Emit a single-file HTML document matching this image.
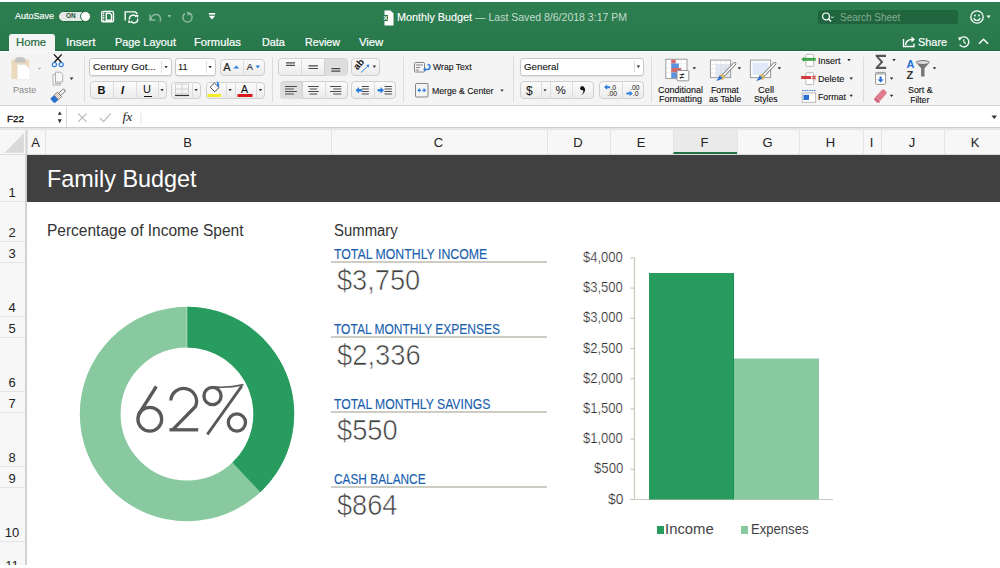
<!DOCTYPE html>
<html><head><meta charset="utf-8">
<style>
*{margin:0;padding:0;box-sizing:border-box}
html,body{width:1000px;height:568px;overflow:hidden;background:#fff;font-family:"Liberation Sans",sans-serif;color:#222}
.a{position:absolute}
.t{position:absolute;white-space:nowrap;line-height:1}
#title{left:0;top:2px;width:1000px;height:49px;background:linear-gradient(#2d7e51,#28784c);border-bottom:1px solid #1c6a3c}
#ribbon{left:0;top:51px;width:1000px;height:55px;background:#f4f4f4;border-bottom:1px solid #d2d2d2;border-top:1px solid #fbfbfb}
#fbar{left:0;top:107px;width:1000px;height:23px;background:linear-gradient(#fff 0,#fff 19.7px,#cdcdcd 19.7px,#cdcdcd 21.2px,#e6e6e6 21.2px)}
#colhdr{left:0;top:130px;width:1000px;height:25px;background:#f7f7f7;border-bottom:1px solid #dcdcdc}
#rowhdr{left:0;top:155px;width:27px;height:410px;overflow:hidden;background:#f7f7f7;border-right:2px solid #d2d2d2}
.ch{position:absolute;top:0;height:24px;border-left:1px solid #e3e3e3;font-size:13px;color:#222;text-align:center;line-height:25px;text-indent:-2px}
.rh{position:absolute;left:0;width:26px;border-top:1px solid #e3e3e3;font-size:13px;color:#222;text-align:center}
.rh span{position:absolute;left:-1px;width:26px;bottom:2px;line-height:1}
.tab{position:absolute;top:36px;font-size:12px;color:#fff;line-height:1}
.btn{position:absolute;background:linear-gradient(#fbfbfb,#ececec);border:1px solid #d0d0d0;border-radius:4px}
.sel{position:absolute;background:#fff;border:1px solid #c8c8c8;border-radius:3px;box-shadow:0 1px 1px rgba(0,0,0,.08)}
.sep{position:absolute;top:57px;width:1px;height:45px;background:#dcdcdc}
.rt{position:absolute;font-size:10px;color:#222;line-height:1;white-space:nowrap}
.lbl{position:absolute;font-size:13.5px;color:#1560b4;white-space:nowrap;line-height:1;letter-spacing:0}
.val{position:absolute;font-size:29px;color:#404040;white-space:nowrap;line-height:1}
.hr{position:absolute;left:331px;width:216px;height:2px;background:#cdcdc5}
.ax{position:absolute;font-size:13px;color:#444;white-space:nowrap;line-height:1;text-align:right;width:60px}
.tx{position:absolute;white-space:nowrap;line-height:1;transform-origin:0 0}
</style></head><body>

<!-- title bar -->
<div id="title" class="a"></div>
<div class="a" style="left:58px;top:11px;width:32px;height:11px;border-radius:6px;background:#e4e9e5;border:1px solid #1b6a3c"></div>
<div class="a" style="left:79.5px;top:11px;width:11px;height:11px;border-radius:50%;background:#fff;border:1px solid #1b6a3c"></div>
<svg class="a" style="left:0;top:0" width="240" height="30">
  <g fill="none" stroke="#fff" stroke-width="1.4">
    <rect x="101.7" y="11.4" width="11.8" height="10.4" rx="1.5"/>
    <line x1="103.6" y1="12.5" x2="103.6" y2="20.8" stroke-dasharray="1.5 0.8"/>
    <path d="M106.3,13.2 h3.6 l1.6,1.6 v5.4 h-5.2 z"/>
    <path d="M125.2,20.5 v-8.6 h10.2 l2,2"/>
    <path d="M129.5,19.5 a3.6,3.6 0 0 1 6.6,-2.6 M137.6,18.6 a3.6,3.6 0 0 1 -6.6,2.6"/>
  </g>
  <g fill="#fff"><path d="M135,15 l3.5,0 l-0.5,3 z"/><path d="M131.2,23 l-3.2,-0.2 l0.8,-3 z"/></g>
  <g fill="none" stroke="rgba(255,255,255,.45)" stroke-width="1.5">
    <path d="M151,19.5 a4.8,4.8 0 1 1 9,2"/>
    <path d="M150,14.5 v5.5 h5.5"/>
    <path d="M190,13.5 a4.6,4.6 0 1 1 -5,0"/>
  </g>
  <path d="M167.6,15 h3.6 l-1.8,2.8z" fill="rgba(255,255,255,.5)"/>
  <path d="M186.5,11.5 l4.5,1.6 l-3,3z" fill="rgba(255,255,255,.45)"/>
  <rect x="208.8" y="13" width="6.4" height="1.6" fill="#fff"/>
  <path d="M208.8,15.8 h6.4 l-3.2,3.6z" fill="#fff"/>
</svg>
<svg class="a" style="left:380px;top:8px" width="16" height="18">
  <path d="M4.5,2.5 h6 l3,3 v12 h-9 z" fill="#fff"/>
  <rect x="3" y="7" width="5" height="6" fill="#2b7b4e" />
  <text x="3.6" y="12.3" font-size="6" font-family="Liberation Sans" font-weight="bold" fill="#fff">X</text>
</svg>
<div class="a" style="left:818px;top:9.5px;width:140px;height:14px;border-radius:3px;background:#1d5f3a;opacity:.8"></div>
<svg class="a" style="left:818px;top:8px" width="24" height="18">
  <circle cx="8" cy="8.4" r="3.4" fill="none" stroke="#fff" stroke-width="1.2"/>
  <line x1="10.4" y1="10.8" x2="13" y2="13.4" stroke="#fff" stroke-width="1.4"/>
  <path d="M12.8,8.5 l1.5,1.5 l1.5,-1.5" fill="none" stroke="#fff" stroke-width="0.9"/>
</svg>
<svg class="a" style="left:966px;top:6px" width="30" height="22">
  <circle cx="11" cy="11" r="6.2" fill="none" stroke="#fff" stroke-width="1.3"/>
  <circle cx="9" cy="9.5" r="0.9" fill="#fff"/><circle cx="13" cy="9.5" r="0.9" fill="#fff"/>
  <path d="M7.8,12 a3.3,3.3 0 0 0 6.4,0" fill="none" stroke="#fff" stroke-width="1.1"/>
  <path d="M20.5,9.6 h4.2 l-2.1,2.6z" fill="#fff"/>
</svg>
<div class="a" style="left:8.5px;top:34px;width:46.5px;height:18px;background:#f4f4f4;border-radius:3px 3px 0 0"></div>
<svg class="a" style="left:900px;top:34px" width="100" height="16">
  <path d="M3.5,5 v7.5 h10.5 v-3" fill="none" stroke="#fff" stroke-width="1.3"/>
  <path d="M5.5,11 c0.5,-4 3,-5.5 6.5,-5.5" fill="none" stroke="#fff" stroke-width="1.5"/>
  <path d="M11.5,2.6 l3.5,3 l-3.5,3z" fill="#fff"/>
  <circle cx="63.8" cy="7.8" r="5" fill="none" stroke="#fff" stroke-width="1.3" stroke-dasharray="26 6" transform="rotate(200 63.8 7.8)"/>
  <path d="M58,3.2 l1.8,3.2 l2.2,-2.8z" fill="#fff"/>
  <path d="M63.8,5.2 v2.8 l2,1.6" fill="none" stroke="#fff" stroke-width="1.1"/>
  <path d="M79,9.8 l4.5,-4.5 l4.5,4.5" fill="none" stroke="#fff" stroke-width="1.5"/>
</svg>


<!-- ribbon -->
<div id="ribbon" class="a"></div>
<div class="sep" style="left:83.5px"></div>
<div class="sep" style="left:272px"></div>
<div class="sep" style="left:403px"></div>
<div class="sep" style="left:513px"></div>
<div class="sep" style="left:651px"></div>
<div class="sep" style="left:862.5px"></div>
<!-- clipboard group -->
<svg class="a" style="left:0;top:50px" width="84" height="56">
  <rect x="11.4" y="9.4" width="17.8" height="19.7" rx="1.5" fill="#ead9bb"/>
  <path d="M15,12.5 v-3 a5.2,3 0 0 1 10.2,0 v3z" fill="#c4c4c4"/>
  <path d="M17.3,14.8 h8.3 l4.5,4.5 v10.3 h-12.8z" fill="#fff" stroke="#e6e6e6" stroke-width="0.6"/>
  <path d="M38,17.8 h3.2 l-1.6,2z" fill="#aaa"/>
  <path d="M54,4.4 l7.7,8.4 M61.7,4.4 l-7.7,8.4" stroke="#111" stroke-width="1.3"/>
  <circle cx="54.4" cy="14.6" r="2.1" fill="none" stroke="#2d7de0" stroke-width="1.2"/>
  <circle cx="61.2" cy="14.6" r="2.1" fill="none" stroke="#2d7de0" stroke-width="1.2"/>
  <path d="M55.5,25 v-2.8 h5 l2.2,2.2 v7.6 h-7.2z" fill="#f8f8f8" stroke="#aaa" stroke-width="0.9"/>
  <path d="M53,24.5 h2.5 v9 h5 v1.5 h-7.5z" fill="#f8f8f8" stroke="#aaa" stroke-width="0.9"/>
  <path d="M69.8,27.5 h3.6 l-1.8,2.4z" fill="#222"/>
  <g transform="translate(52.5,50.8) rotate(-42)">
    <path d="M0,-3.2 h5.2 v6.4 h-5.2 q-1,-3.2 0,-6.4z" fill="#2c6fd1"/>
    <rect x="5.2" y="-3.2" width="4.2" height="6.4" fill="#fff" stroke="#7a6448" stroke-width="0.7"/>
    <path d="M6.6,-3 v6 M8,-3 v6" stroke="#9b7d57" stroke-width="0.6"/>
    <rect x="9.4" y="-1.5" width="7" height="3" rx="1.5" fill="#fff" stroke="#555" stroke-width="0.8"/>
  </g>
</svg>
<!-- font group -->
<div class="sel" style="left:89px;top:58px;width:83px;height:18px"></div>
<div class="a" style="left:160.5px;top:61px;width:1px;height:12px;background:#e0e0e0"></div>
<div class="sel" style="left:175px;top:58px;width:41px;height:18px"></div>
<div class="a" style="left:205.5px;top:61px;width:1px;height:12px;background:#e0e0e0"></div>
<svg class="a" style="left:0;top:50px" width="280" height="56">
  <path d="M164.4,16 h3.4 l-1.7,2.2z M208.4,16 h3.4 l-1.7,2.2z" fill="#333"/>
</svg>
<div class="btn" style="left:220px;top:58.5px;width:44.5px;height:17px"></div>
<div class="a" style="left:242.5px;top:59px;width:1px;height:16px;background:#dcdcdc"></div>
<svg class="a" style="left:0;top:50px" width="280" height="56">
  <path d="M233.4,18.6 l2.9,-3 l2.9,3z" fill="#2d7de0"/>
  <path d="M255.6,15.6 h4.4 l-2.2,2.8z" fill="#2d7de0"/>
</svg>
<div class="btn" style="left:90px;top:81.3px;width:76.5px;height:17.7px"></div>
<div class="a" style="left:112.5px;top:82px;width:1px;height:16.5px;background:#dcdcdc"></div>
<div class="a" style="left:135.5px;top:82px;width:1px;height:16.5px;background:#dcdcdc"></div>
<div class="a" style="left:157.5px;top:82px;width:1px;height:16.5px;background:#dcdcdc"></div>
<div class="btn" style="left:171px;top:81.5px;width:30px;height:17.5px"></div>
<div class="a" style="left:192px;top:82px;width:1px;height:16.5px;background:#dcdcdc"></div>
<div class="btn" style="left:205.5px;top:81.5px;width:59px;height:17.5px"></div>
<div class="a" style="left:225.5px;top:82px;width:1px;height:16.5px;background:#dcdcdc"></div>
<div class="a" style="left:235px;top:82px;width:1px;height:16.5px;background:#dcdcdc"></div>
<div class="a" style="left:256px;top:82px;width:1px;height:16.5px;background:#dcdcdc"></div>
<svg class="a" style="left:0;top:50px" width="280" height="56">
  <path d="M160.4,39 h3.4 l-1.7,2.2z M194.4,39 h3.4 l-1.7,2.2z M228.4,39 h3.4 l-1.7,2.2z M258.8,39 h3.4 l-1.7,2.2z" fill="#333"/>
  <g stroke="#c8c8c8" stroke-width="0.8" fill="none"><rect x="175.5" y="34" width="13" height="10"/><line x1="182" y1="34" x2="182" y2="44"/><line x1="175.5" y1="39" x2="188.5" y2="39"/></g>
  <line x1="175" y1="45.5" x2="189" y2="45.5" stroke="#333" stroke-width="1.2"/>
  <rect x="207.5" y="44" width="13.5" height="3" fill="#f4ee2a"/>
  <path d="M210.2,37.2 l4.2,-4.2 l4.6,4.6 l-4.2,4.2z" fill="#fff" stroke="#333" stroke-width="0.9"/>
  <path d="M216.8,31 q3.4,2.6 2.2,6.2 q-2.4,-1 -2.2,-6.2z" fill="#2d7de0"/>
  <rect x="237.5" y="44" width="15" height="3" fill="#d9161c"/>
</svg>
<!-- alignment group -->
<div class="btn" style="left:278px;top:58px;width:69.5px;height:18px"></div>
<div class="a" style="left:324px;top:58.5px;width:23px;height:17px;background:#dedede;border-radius:0 3px 3px 0"></div>
<div class="a" style="left:301px;top:58.5px;width:1px;height:17px;background:#dcdcdc"></div>
<div class="a" style="left:324px;top:58.5px;width:1px;height:17px;background:#d0d0d0"></div>
<div class="btn" style="left:351px;top:58px;width:28.5px;height:18px"></div>
<div class="btn" style="left:279.5px;top:81px;width:68px;height:18px"></div>
<div class="a" style="left:280px;top:81.5px;width:22px;height:17px;background:#dedede;border-radius:3px 0 0 3px"></div>
<div class="a" style="left:302px;top:81.5px;width:1px;height:17px;background:#d0d0d0"></div>
<div class="a" style="left:324.5px;top:81.5px;width:1px;height:17px;background:#dcdcdc"></div>
<div class="btn" style="left:351px;top:81px;width:45px;height:18px"></div>
<div class="a" style="left:373.5px;top:81.5px;width:1px;height:17px;background:#dcdcdc"></div>
<svg class="a" style="left:0;top:0" width="420" height="110">
  <g stroke="#4a4a4a" stroke-width="1.2">
    <path d="M286,62.8 h9 M286,65.3 h9"/>
    <path d="M308.5,65.8 h9.4 M308.5,68.5 h9.4"/>
    <path d="M331.3,68.6 h9 M331.3,71.2 h9"/>
    <path d="M285,86.5 h11.9 M285,89 h8.8 M285,91.5 h11.9 M285,94 h8.8"/>
    <path d="M308,86.5 h10.8 M309.6,89 h7.6 M308,91.5 h10.8 M309.6,94 h7.6"/>
    <path d="M330,86.5 h11.3 M333.2,89 h8.1 M330,91.5 h11.3 M333.2,94 h8.1"/>
    <path d="M361.8,86.5 h7 M361.8,89 h7 M361.8,91.5 h7 M361.8,94 h7"/>
    <path d="M384.5,86.5 h7.4 M384.5,89 h7.4 M384.5,91.5 h7.4 M384.5,94 h7.4"/>
  </g>
  <path d="M355.6,90.2 l3.4,-3.2 v2 h3 v2.4 h-3 v2z" fill="#2d7de0"/>
  <path d="M384,90.2 l-3.4,-3.2 v2 h-3 v2.4 h3 v2z" fill="#2d7de0"/>
  <text x="0" y="0" font-size="9.5" font-family="Liberation Sans" font-weight="bold" fill="#111" transform="translate(357.5,70.5) rotate(-50)">ab</text>
  <line x1="361" y1="72.5" x2="368" y2="65.8" stroke="#2d7de0" stroke-width="1"/>
  <path d="M369.3,64.5 l-3.2,0.6 l2.6,2.6z" fill="#2d7de0"/>
  <path d="M372.7,65.6 h3.4 l-1.7,2.3z" fill="#333"/>
</svg>
<!-- styles -->
<svg class="a" style="left:650px;top:50px" width="350" height="56">
  <rect x="15.8" y="9.2" width="21.2" height="19.4" fill="#fff" stroke="#999" stroke-width="1"/>
  <g stroke="#e4e4e4" stroke-width="0.6"><path d="M16.3,13.5 h20.2 M16.3,18 h20.2 M16.3,22.5 h20.2 M21,9.7 v18.4 M26,9.7 v18.4 M31,9.7 v18.4"/></g>
  <rect x="21.2" y="9.7" width="4.5" height="3.8" fill="#d26b6b"/>
  <rect x="21.2" y="13.5" width="7.7" height="4.5" fill="#5b93e0"/>
  <rect x="21.2" y="18" width="10" height="4.5" fill="#d26b6b"/>
  <rect x="21.2" y="22.5" width="6" height="5.6" fill="#5b93e0"/>
  <rect x="27" y="20.5" width="11.8" height="10.3" rx="1" fill="#fff" stroke="#888" stroke-width="0.9"/>
  <text x="29.3" y="29" font-size="9.5" font-family="Liberation Sans" fill="#111">&#8800;</text>
  <path d="M42.6,17.2 h3.4 l-1.7,2.2z" fill="#222"/>
  <rect x="60.4" y="10.1" width="20.2" height="17.5" fill="#fff" stroke="#999" stroke-width="1"/>
  <path d="M66,14.5 h14.1 v12.6 h-14.1z" fill="#dfe9f8"/>
  <g stroke="#d9d9d9" stroke-width="0.6"><path d="M60.9,14.5 h19.2 M60.9,18.8 h19.2 M60.9,23.1 h19.2 M66,10.6 v16.5 M71,10.6 v16.5 M76,10.6 v16.5"/></g>
  <path d="M84.7,13.7 l-11.5,12" stroke="#666" stroke-width="3.2" stroke-linecap="round"/>
  <path d="M84.7,13.7 l-11.5,12" stroke="#fff" stroke-width="1.8" stroke-linecap="round"/>
  <circle cx="71.8" cy="27" r="2.8" fill="#d9b56a"/>
  <path d="M69.6,25.5 q-1,3.5 -3.8,5 q4.5,0.3 6.5,-2.8z" fill="#2d6fd0"/>
  <path d="M87.6,17.2 h3.4 l-1.7,2.2z" fill="#222"/>
  <rect x="100.4" y="10.1" width="20.2" height="17.5" fill="#fff" stroke="#999" stroke-width="1"/>
  <rect x="102.5" y="12.5" width="16" height="12.5" fill="#dfe9f8"/>
  <path d="M124.7,13.7 l-11.5,12" stroke="#666" stroke-width="3.2" stroke-linecap="round"/>
  <path d="M124.7,13.7 l-11.5,12" stroke="#fff" stroke-width="1.8" stroke-linecap="round"/>
  <circle cx="111.8" cy="27" r="2.8" fill="#d9b56a"/>
  <path d="M109.6,25.5 q-1,3.5 -3.8,5 q4.5,0.3 6.5,-2.8z" fill="#2d6fd0"/>
  <path d="M127.6,17.2 h3.4 l-1.7,2.2z" fill="#222"/>
  <!-- cells -->
  <rect x="155.8" y="4.4" width="7.9" height="11.9" rx="1" fill="#fff" stroke="#aaa" stroke-width="0.8"/>
  <rect x="153" y="7.9" width="12.7" height="2.9" fill="#3fa54a"/>
  <path d="M151.2,9.35 l3,-2.6 v5.2z" fill="#3fa54a"/>
  <path d="M197.3,9 h3.4 l-1.7,2.2z" fill="#222"/>
  <rect x="155.8" y="22.7" width="7.9" height="11.8" rx="1" fill="#fff" stroke="#aaa" stroke-width="0.8"/>
  <rect x="151.2" y="26" width="10" height="3" fill="#d43a3a"/>
  <path d="M162.3,25.8 l3.4,3.4 M165.7,25.8 l-3.4,3.4" stroke="#d43a3a" stroke-width="1.1"/>
  <path d="M199.5,27.5 h3.4 l-1.7,2.2z" fill="#222"/>
  <path d="M152,40.5 h13.7" stroke="#2d6fd0" stroke-width="0.9" stroke-dasharray="1.6 0.8"/>
  <rect x="152.2" y="43" width="13.5" height="9.3" fill="#fff" stroke="#aaa" stroke-width="0.8"/>
  <rect x="153.5" y="44.8" width="5.5" height="5.2" fill="#2d6fd0"/>
  <path d="M199.5,44.8 h3.4 l-1.7,2.2z" fill="#222"/>
  <!-- editing -->
  <path d="M225.6,4.8 h10.4 v2.2 h-7.2 l4.5,4.9 l-4.5,4.9 h7.4 v2.2 h-10.6 v-1.4 l5,-5.7 l-5,-5.7z" fill="#555"/>
  <path d="M242.3,9 h3.4 l-1.7,2.2z" fill="#222"/>
  <rect x="225.6" y="22.4" width="10" height="12" rx="1" fill="#fff" stroke="#888" stroke-width="0.9"/>
  <rect x="226.1" y="22.9" width="9" height="1.8" fill="#bbb"/>
  <path d="M229.5,26.5 h2.2 v3 h2 l-3.1,3 l-3.1,-3 h2z" fill="#2d6fd0"/>
  <path d="M239.9,27.5 h3.4 l-1.7,2.2z" fill="#222"/>
  <path d="M224.5,48 l7.5,-8.2 a1.6,1.6 0 0 1 2.3,0 l2,2 a1.6,1.6 0 0 1 0,2.3 l-7.5,8.2 a1.6,1.6 0 0 1 -2.3,0 l-2,-2 a1.6,1.6 0 0 1 0,-2.3z" fill="#e07a8f"/>
  <path d="M225,49 l4.5,3.5" stroke="#b5485e" stroke-width="1"/>
  <path d="M239.9,44.8 h3.4 l-1.7,2.2z" fill="#222"/>
  <text x="256.4" y="18.2" font-size="11" font-family="Liberation Sans" font-weight="bold" fill="#1f6fd6">A</text>
  <text x="256.6" y="28.6" font-size="11" font-family="Liberation Sans" font-weight="bold" fill="#333">Z</text>
  <path d="M265.8,12.3 a7,2.2 0 0 1 14,0 l-5.3,6 v8.2 h-3.4 v-8.2z" fill="#777"/>
  <ellipse cx="272.8" cy="12.5" rx="6" ry="1.5" fill="#ddd"/>
  <path d="M282.8,17.2 h3.4 l-1.7,2.2z" fill="#222"/>
</svg>
<!-- wrap / merge -->
<svg class="a" style="left:400px;top:50px" width="113" height="56">
  <g fill="none" stroke="#777" stroke-width="0.9">
    <rect x="14.5" y="12.5" width="10" height="9.5" rx="1"/>
    <path d="M16,15 h7 M16,17.5 h4 M16,20 h3"/>
    <rect x="15.5" y="33.5" width="12.5" height="13.5" rx="1"/>
  </g>
  <path d="M27.5,14.5 a2.5,2.5 0 0 1 0,5 h-3" fill="none" stroke="#2d7de0" stroke-width="1.5"/>
  <path d="M23,19.5 l2.5,-2.2 v4.4z" fill="#2d7de0"/>
  <path d="M17.3,40.3 l2.6,-2.2 v4.4z M26.2,40.3 l-2.6,-2.2 v4.4z" fill="#2d7de0"/><path d="M19.5,40.3 h1.6 M22.4,40.3 h1.6" stroke="#2d7de0" stroke-width="1.2"/>
  <path d="M100.3,39.5 h3.4 l-1.7,2.2z" fill="#333"/>
</svg>
<!-- number -->
<div class="sel" style="left:520px;top:58px;width:124px;height:18px"></div>
<div class="a" style="left:634px;top:61px;width:1px;height:12px;background:#e0e0e0"></div>
<div class="btn" style="left:520px;top:81px;width:74px;height:18px"></div>
<div class="a" style="left:540.5px;top:81.5px;width:1px;height:17px;background:#dcdcdc"></div>
<div class="a" style="left:549.5px;top:81.5px;width:1px;height:17px;background:#dcdcdc"></div>
<div class="a" style="left:572px;top:81.5px;width:1px;height:17px;background:#dcdcdc"></div>
<div class="btn" style="left:598.5px;top:81px;width:45.5px;height:18px"></div>
<div class="a" style="left:621.5px;top:81.5px;width:1px;height:17px;background:#dcdcdc"></div>
<svg class="a" style="left:0;top:0" width="660" height="110">
  <path d="M636.6,65.6 h3.6 l-1.8,2.4z" fill="#333"/>
  <path d="M543.4,89.2 h3.2 l-1.6,2.2z" fill="#333"/>
  <circle cx="582" cy="88.2" r="1.9" fill="#111"/><path d="M582,86.3 C586,86.6 586.6,92.5 581,95.6 C584.2,92.6 584,89.6 581.6,90z" fill="#111"/>
  <path d="M604,87.2 l3.2,-2.6 v1.6 h3 v2 h-3 v1.6z" fill="#2d7de0"/>
  <text x="610.4" y="89.8" font-size="6.8" font-family="Liberation Sans" fill="#111">.0</text>
  <text x="607.6" y="96" font-size="6.8" font-family="Liberation Sans" fill="#111">.00</text>
  <text x="630.2" y="89.8" font-size="6.8" font-family="Liberation Sans" fill="#111">.00</text>
  <path d="M632.8,93.4 l-3.2,-2.6 v1.6 h-3.2 v2 h3.2 v1.6z" fill="#2d7de0"/>
  <text x="632.8" y="96" font-size="6.8" font-family="Liberation Sans" fill="#111">.0</text>
</svg>


<!-- formula bar -->
<div id="fbar" class="a"></div>
<svg class="a" style="left:0;top:104px" width="1000" height="26">
  <path d="M57.7,10.8 l2.05,-3.3 l2.05,3.3z M57.7,15.3 h4.1 l-2.05,3.9z" fill="#333"/>
  <line x1="66.5" y1="3" x2="66.5" y2="23" stroke="#d8d8d8" stroke-width="1"/>
  <path d="M78.2,9.5 l8.3,8.3 M86.5,9.5 l-8.3,8.3" stroke="#bdbdbd" stroke-width="1.2"/>
  <path d="M100,14 l3.5,3.7 l7.3,-8.2" fill="none" stroke="#bdbdbd" stroke-width="1.2"/>
  <line x1="141" y1="9" x2="141" y2="20" stroke="#e0e0e0" stroke-width="1"/>
  <path d="M991.5,11.5 h5.5 l-2.75,3.5z" fill="#333"/>
</svg>


<!-- column headers -->
<div id="colhdr" class="a">
  <svg class="a" style="left:0;top:0" width="27" height="25"><path d="M4.6,22.7 H23.9 V3z" fill="#d9d9d9"/><rect x="25.4" y="0" width="1.6" height="25" fill="#d3d3d3"/></svg>
  <div class="ch" style="left:27px;width:18px">A</div>
  <div class="ch" style="left:45px;width:286px">B</div>
  <div class="ch" style="left:331px;width:216px">C</div>
  <div class="ch" style="left:547px;width:63px">D</div>
  <div class="ch" style="left:610px;width:63px">E</div>
  <div class="ch" style="left:673px;width:64px;background:#eaeaea;border-bottom:2px solid #217346">F</div>
  <div class="ch" style="left:737px;width:62px">G</div>
  <div class="ch" style="left:799px;width:64px">H</div>
  <div class="ch" style="left:863px;width:18px">I</div>
  <div class="ch" style="left:881px;width:63px">J</div>
  <div class="ch" style="left:944px;width:63px">K</div>
</div>

<!-- row headers -->
<div id="rowhdr" class="a">
  <div class="rh" style="top:0;height:46px;border-top:none"><span>1</span></div>
  <div class="rh" style="top:46px;height:40px"><span>2</span></div>
  <div class="rh" style="top:86px;height:21px"><span>3</span></div>
  <div class="rh" style="top:107px;height:54px"><span>4</span></div>
  <div class="rh" style="top:161px;height:21px"><span>5</span></div>
  <div class="rh" style="top:182px;height:54px"><span>6</span></div>
  <div class="rh" style="top:236px;height:21px"><span>7</span></div>
  <div class="rh" style="top:257px;height:54px"><span>8</span></div>
  <div class="rh" style="top:311px;height:21px"><span>9</span></div>
  <div class="rh" style="top:332px;height:54px"><span>10</span></div>
  <div class="rh" style="top:386px;height:40px"><span style="bottom:auto;top:16.5px">11</span></div>
</div>

<!-- dark title band -->
<div class="a" style="left:27px;top:155px;width:973px;height:46.6px;background:#404040"></div>


<div class="hr" style="top:261px"></div>

<div class="hr" style="top:336px"></div>

<div class="hr" style="top:411px"></div>

<div class="hr" style="top:486px"></div>

<!-- donut -->
<svg class="a" style="left:0;top:0" width="1000" height="568">
  <circle cx="187" cy="414" r="86.8" fill="none" stroke="#89c9a0" stroke-width="40.8"/>
  <path d="M187.00,306.80 A107.2,107.2 0 0 1 260.38,492.15 L232.45,462.40 A66.4,66.4 0 0 0 187.00,347.60 Z" fill="#279c5e"/>
  <line x1="187" y1="306" x2="187" y2="348" stroke="#fff" stroke-width="0.8" opacity="0.5"/>
</svg>

<!-- bar chart -->
<svg class="a" style="left:0;top:0" width="1000" height="568">
  <g stroke="#c8c8bc" stroke-width="1.2">
    <line x1="634.5" y1="257.5" x2="634.5" y2="500"/>
    <line x1="630" y1="499.5" x2="833" y2="499.5"/><line x1="630.5" y1="257.9" x2="634.5" y2="257.9"/><line x1="630.5" y1="288.1" x2="634.5" y2="288.1"/><line x1="630.5" y1="318.3" x2="634.5" y2="318.3"/><line x1="630.5" y1="348.5" x2="634.5" y2="348.5"/><line x1="630.5" y1="378.7" x2="634.5" y2="378.7"/><line x1="630.5" y1="408.9" x2="634.5" y2="408.9"/><line x1="630.5" y1="439.1" x2="634.5" y2="439.1"/><line x1="630.5" y1="469.3" x2="634.5" y2="469.3"/><line x1="630.5" y1="499.5" x2="634.5" y2="499.5"/>
  </g>
  <rect x="649" y="273" width="85" height="226.5" fill="#279c5e"/><line x1="733.5" y1="273" x2="733.5" y2="499.5" stroke="#1e9150" stroke-width="1"/>
  <rect x="734" y="358.5" width="85" height="141" fill="#89c9a0"/>
  <rect x="657" y="526" width="7" height="8" fill="#279c5e"/>
  <rect x="741" y="526" width="7" height="8" fill="#89c9a0"/>
</svg>

<svg class="a" style="left:0;top:0" width="300" height="568">
<g fill="none" stroke="#595959" stroke-width="3.3">
 <circle cx="149.8" cy="419.2" r="11.9"/>
 <path d="M156.3,386.5 L138.6,414.5"/>
 <path d="M170.8,400.5 A12.9,12.9 0 1 1 195.5,406.5 L172.5,429.8"/>
 <path d="M169.5,429.8 H198.2"/>
 <circle cx="212.5" cy="396" r="8.6"/>
 <circle cx="236.9" cy="422.5" r="8.6"/>
</g>
<path d="M241.8,386 L207.3,434.5" fill="none" stroke="#595959" stroke-width="3"/>
<path d="M243.5,384.6 C232,387.5 222,387.6 212.5,386.9" fill="none" stroke="#595959" stroke-width="1.6"/>
</svg>
<div class="tx" style="left:223.3px;top:61.5px;font-size:11px;color:#222;-webkit-text-stroke:0.2px #222">A</div>
<div class="tx" style="left:246.8px;top:63.3px;font-size:9.2px;color:#222;-webkit-text-stroke:0.15px #222">A</div>
<div class="tx" style="left:97.5px;top:84.5px;font-size:11px;font-weight:bold;color:#111">B</div>
<div class="tx" style="left:121px;top:84.5px;font-size:11px;font-style:italic;font-weight:bold;color:#111">I</div>
<div class="tx" style="left:143px;top:84px;font-size:11px;color:#111">U</div>
<div class="a" style="left:143.5px;top:95.5px;width:8px;height:1.2px;background:#111"></div>
<div class="tx" style="left:241px;top:83.6px;font-size:10.5px;color:#111;-webkit-text-stroke:0.15px #111">A</div>
<div class="tx" style="left:526px;top:84.5px;font-size:12px;color:#111">$</div>
<div class="tx" style="left:555.5px;top:85px;font-size:11.5px;color:#111">%</div>
<div class="tx" style="left:122.5px;top:110px;font-size:13.5px;font-family:'Liberation Serif',serif;font-style:italic;color:#222">fx</div>
<div class="tx" style="left:15.00px;top:12.14px;font-size:9.29px;color:#fff;transform:scaleX(0.966);-webkit-text-stroke:0.15px #fff;">AutoSave</div>
<div class="tx" style="left:65.74px;top:13.24px;font-size:6.57px;color:#1d4f30;transform:scaleX(0.982);font-weight:bold;">ON</div>
<div class="tx" style="left:396.93px;top:12.61px;font-size:10.14px;color:#fff;transform:scaleX(1.066);-webkit-text-stroke:0.12px #fff;">Monthly Budget</div>
<div class="tx" style="left:475.10px;top:12.71px;font-size:10.14px;color:#c3dccb;transform:scaleX(1.039);">— Last Saved 8/6/2018 3:17 PM</div>
<div class="tx" style="left:839.95px;top:12.91px;font-size:10.14px;color:#86ad94;transform:scaleX(0.983);">Search Sheet</div>
<div class="tx" style="left:15.90px;top:36.69px;font-size:11.00px;color:#1f6b3d;transform:scaleX(1.027);-webkit-text-stroke:0.2px #1f6b3d;">Home</div>
<div class="tx" style="left:65.64px;top:36.69px;font-size:11.00px;color:#fff;transform:scaleX(1.070);-webkit-text-stroke:0.2px #fff;">Insert</div>
<div class="tx" style="left:114.73px;top:36.69px;font-size:11.00px;color:#fff;transform:scaleX(0.986);-webkit-text-stroke:0.2px #fff;">Page Layout</div>
<div class="tx" style="left:194.10px;top:36.69px;font-size:11.00px;color:#fff;transform:scaleX(1.020);-webkit-text-stroke:0.2px #fff;">Formulas</div>
<div class="tx" style="left:261.63px;top:36.69px;font-size:11.00px;color:#fff;transform:scaleX(0.985);-webkit-text-stroke:0.2px #fff;">Data</div>
<div class="tx" style="left:304.55px;top:36.69px;font-size:11.00px;color:#fff;transform:scaleX(0.969);-webkit-text-stroke:0.2px #fff;">Review</div>
<div class="tx" style="left:359.24px;top:36.69px;font-size:11.00px;color:#fff;transform:scaleX(1.026);-webkit-text-stroke:0.2px #fff;">View</div>
<div class="tx" style="left:918.21px;top:36.08px;font-size:11.71px;color:#fff;transform:scaleX(0.932);-webkit-text-stroke:0.2px #fff;">Share</div>
<div class="tx" style="left:13.17px;top:85.77px;font-size:8.43px;color:#8a8a8a;transform:scaleX(1.079);">Paste</div>
<div class="tx" style="left:93.39px;top:61.78px;font-size:9.71px;color:#111;transform:scaleX(1.041);-webkit-text-stroke:0.1px #111;">Century Got...</div>
<div class="tx" style="left:178.30px;top:61.78px;font-size:9.71px;color:#111;transform:scaleX(0.956);-webkit-text-stroke:0.1px #111;">11</div>
<div class="tx" style="left:524.21px;top:61.78px;font-size:9.71px;color:#111;transform:scaleX(1.005);-webkit-text-stroke:0.1px #111;">General</div>
<div class="tx" style="left:432.96px;top:62.70px;font-size:8.86px;color:#111;transform:scaleX(0.977);-webkit-text-stroke:0.1px #111;">Wrap Text</div>
<div class="tx" style="left:432.30px;top:86.80px;font-size:8.86px;color:#111;transform:scaleX(0.983);-webkit-text-stroke:0.1px #111;">Merge &amp; Center</div>
<div class="tx" style="left:658.15px;top:85.94px;font-size:8.57px;color:#111;transform:scaleX(1.053);-webkit-text-stroke:0.1px #111;">Conditional</div>
<div class="tx" style="left:658.98px;top:94.74px;font-size:8.57px;color:#111;transform:scaleX(1.050);-webkit-text-stroke:0.1px #111;">Formatting</div>
<div class="tx" style="left:711.00px;top:85.94px;font-size:8.57px;color:#111;transform:scaleX(1.023);-webkit-text-stroke:0.1px #111;">Format</div>
<div class="tx" style="left:709.15px;top:94.74px;font-size:8.57px;color:#111;transform:scaleX(1.015);-webkit-text-stroke:0.1px #111;">as Table</div>
<div class="tx" style="left:757.53px;top:85.94px;font-size:8.57px;color:#111;transform:scaleX(1.090);-webkit-text-stroke:0.1px #111;">Cell</div>
<div class="tx" style="left:753.61px;top:94.74px;font-size:8.57px;color:#111;transform:scaleX(1.014);-webkit-text-stroke:0.1px #111;">Styles</div>
<div class="tx" style="left:817.89px;top:57.14px;font-size:8.57px;color:#111;transform:scaleX(1.053);-webkit-text-stroke:0.1px #111;">Insert</div>
<div class="tx" style="left:817.97px;top:75.34px;font-size:8.57px;color:#111;transform:scaleX(1.059);-webkit-text-stroke:0.1px #111;">Delete</div>
<div class="tx" style="left:818.00px;top:93.14px;font-size:8.57px;color:#111;transform:scaleX(1.027);-webkit-text-stroke:0.1px #111;">Format</div>
<div class="tx" style="left:907.50px;top:86.24px;font-size:8.57px;color:#111;transform:scaleX(1.036);-webkit-text-stroke:0.1px #111;">Sort &amp;</div>
<div class="tx" style="left:910.21px;top:95.64px;font-size:8.57px;color:#111;-webkit-text-stroke:0.1px #111;">Filter</div>
<div class="tx" style="left:7.41px;top:113.72px;font-size:9.43px;color:#111;transform:scaleX(1.054);-webkit-text-stroke:0.3px #111;">F22</div>
<div class="tx" style="left:47.13px;top:166.80px;font-size:23.86px;color:#fff;transform:scaleX(0.981);">Family Budget</div>
<div class="tx" style="left:47.16px;top:222.70px;font-size:15.71px;color:#333;transform:scaleX(0.987);">Percentage of Income Spent</div>
<div class="tx" style="left:333.53px;top:223.02px;font-size:15.57px;color:#333;transform:scaleX(0.958);">Summary</div>
<div class="tx" style="left:334.25px;top:247.11px;font-size:14.29px;color:#1a5fb0;transform:scaleX(0.862);-webkit-text-stroke:0.15px #1a5fb0;">TOTAL MONTHLY INCOME</div>
<div class="tx" style="left:334.26px;top:322.11px;font-size:14.29px;color:#1a5fb0;transform:scaleX(0.840);-webkit-text-stroke:0.15px #1a5fb0;">TOTAL MONTHLY EXPENSES</div>
<div class="tx" style="left:334.26px;top:397.11px;font-size:14.29px;color:#1a5fb0;transform:scaleX(0.854);-webkit-text-stroke:0.15px #1a5fb0;">TOTAL MONTHLY SAVINGS</div>
<div class="tx" style="left:333.91px;top:472.11px;font-size:14.29px;color:#1a5fb0;transform:scaleX(0.830);-webkit-text-stroke:0.15px #1a5fb0;">CASH BALANCE</div>
<div class="tx" style="left:336.73px;top:265.77px;font-size:28.86px;color:#3f3f3f;transform:scaleX(0.942);-webkit-text-stroke:0.6px #fff;">$3,750</div>
<div class="tx" style="left:336.73px;top:340.97px;font-size:28.86px;color:#3f3f3f;transform:scaleX(0.948);-webkit-text-stroke:0.6px #fff;">$2,336</div>
<div class="tx" style="left:336.73px;top:415.97px;font-size:28.86px;color:#3f3f3f;transform:scaleX(0.943);-webkit-text-stroke:0.6px #fff;">$550</div>
<div class="tx" style="left:336.73px;top:490.97px;font-size:28.86px;color:#3f3f3f;transform:scaleX(0.940);-webkit-text-stroke:0.6px #fff;">$864</div>
<div class="tx" style="left:665.26px;top:522.99px;font-size:13.71px;color:#444;transform:scaleX(1.085);">Income</div>
<div class="tx" style="left:750.95px;top:522.99px;font-size:13.71px;color:#444;transform:scaleX(0.955);">Expenses</div>
<div class="tx" style="left:583.07px;top:249.93px;font-size:14.14px;color:#333;transform:scaleX(0.922);-webkit-text-stroke:0.2px #fff;">$4,000</div>
<div class="tx" style="left:583.07px;top:280.13px;font-size:14.14px;color:#333;transform:scaleX(0.922);-webkit-text-stroke:0.2px #fff;">$3,500</div>
<div class="tx" style="left:583.07px;top:310.33px;font-size:14.14px;color:#333;transform:scaleX(0.922);-webkit-text-stroke:0.2px #fff;">$3,000</div>
<div class="tx" style="left:583.07px;top:340.53px;font-size:14.14px;color:#333;transform:scaleX(0.922);-webkit-text-stroke:0.2px #fff;">$2,500</div>
<div class="tx" style="left:583.07px;top:370.73px;font-size:14.14px;color:#333;transform:scaleX(0.922);-webkit-text-stroke:0.2px #fff;">$2,000</div>
<div class="tx" style="left:583.07px;top:400.93px;font-size:14.14px;color:#333;transform:scaleX(0.922);-webkit-text-stroke:0.2px #fff;">$1,500</div>
<div class="tx" style="left:583.07px;top:431.13px;font-size:14.14px;color:#333;transform:scaleX(0.922);-webkit-text-stroke:0.2px #fff;">$1,000</div>
<div class="tx" style="left:593.57px;top:461.33px;font-size:14.14px;color:#333;transform:scaleX(0.934);-webkit-text-stroke:0.2px #fff;">$500</div>
<div class="tx" style="left:607.56px;top:491.53px;font-size:14.14px;color:#333;transform:scaleX(0.983);-webkit-text-stroke:0.2px #fff;">$0</div>
</body></html>
